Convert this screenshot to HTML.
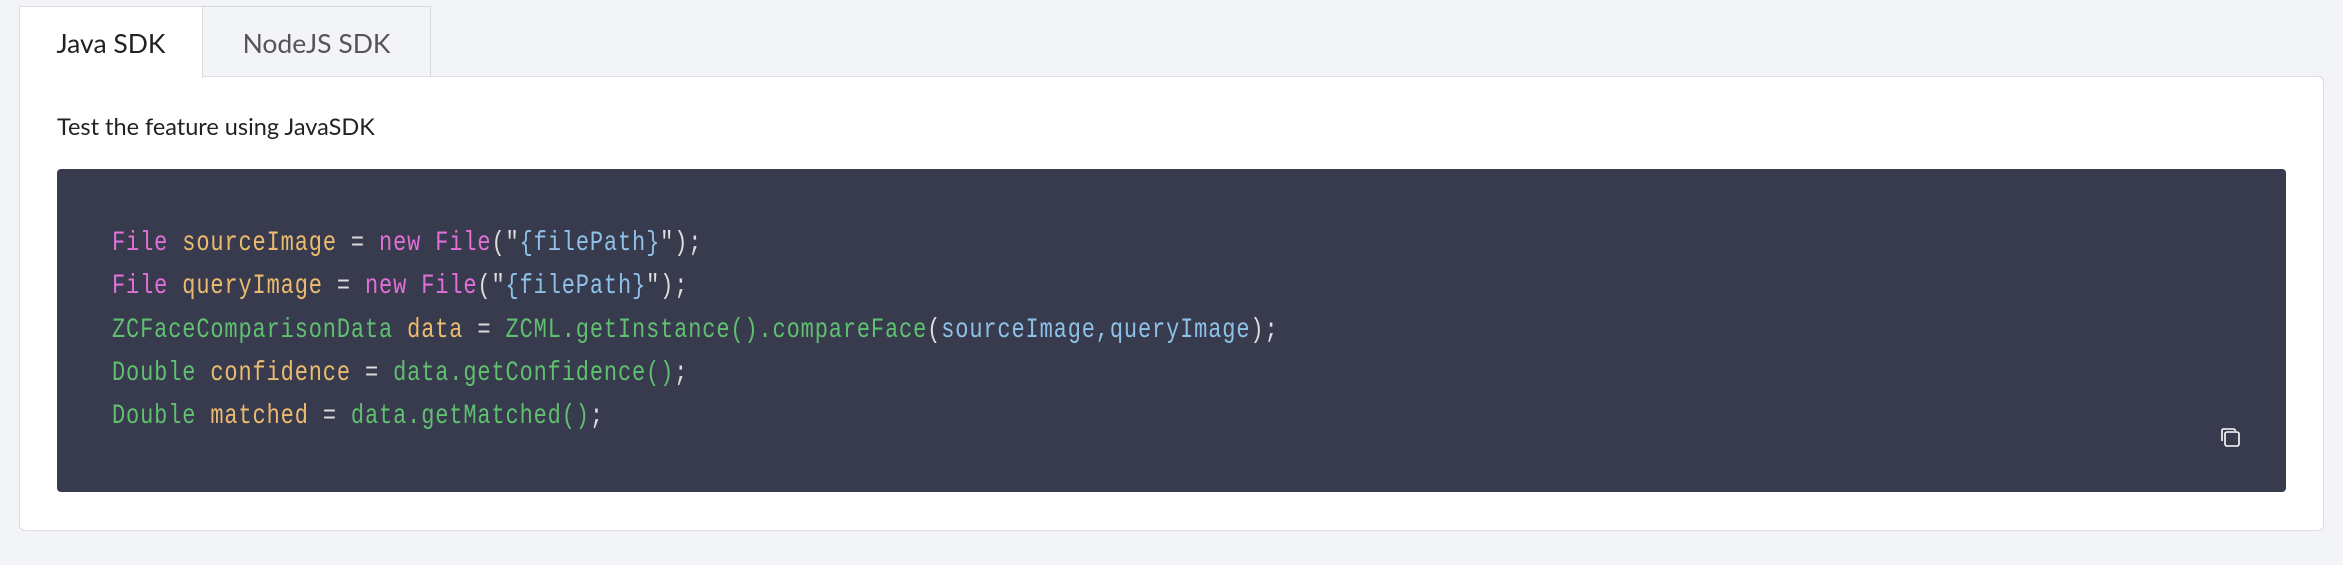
<!DOCTYPE html>
<html><head><style>
html,body{margin:0;padding:0;width:2343px;height:565px;background:#f3f4f8;overflow:hidden}
body{position:relative;font-family:"Lato","Liberation Sans",sans-serif}
.tab{position:absolute;top:6px;height:71px;box-sizing:border-box;font-size:26.5px;line-height:72px;text-align:center}
.t1{left:19px;width:184px;background:#fff;border:1px solid #dcdde3;border-bottom:none;color:#222;height:72px;z-index:2}
.t2{left:202px;width:229px;background:#f3f4f8;border:1px solid #d6d7de;color:#555}
.panel{position:absolute;left:19px;top:76px;width:2305px;height:455px;box-sizing:border-box;background:#fff;border:1px solid #dcdde3;border-radius:0 6px 6px 6px}
.desc{position:absolute;left:57px;top:113px;font-size:23.5px;color:#222}
.code{position:absolute;left:57px;top:169px;width:2229px;height:323px;background:#383a4d;border-radius:4px}
pre{margin:0;position:absolute;left:112px;top:222px;font-family:"Liberation Mono",monospace;font-size:28px;line-height:43.3px;letter-spacing:1.1px;color:#ddd;transform:scaleX(0.785);transform-origin:0 0}
.k{color:#e070d8}.v{color:#ebbb6f}.s{color:#8dc1e6}.g{color:#5fc06f}
</style></head><body>
<div class="tab t1">Java SDK</div>
<div class="tab t2">NodeJS SDK</div>
<div class="panel"></div>
<div class="desc">Test the feature using JavaSDK</div>
<div class="code"></div>
<pre><span class="k">File</span> <span class="v">sourceImage</span> = <span class="k">new File</span>("<span class="s">{filePath}</span>");
<span class="k">File</span> <span class="v">queryImage</span> = <span class="k">new File</span>("<span class="s">{filePath}</span>");
<span class="g">ZCFaceComparisonData</span> <span class="v">data</span> = <span class="g">ZCML.getInstance().compareFace</span>(<span class="s">sourceImage,queryImage</span>);
<span class="g">Double</span> <span class="v">confidence</span> = <span class="g">data.getConfidence()</span>;
<span class="g">Double</span> <span class="v">matched</span> = <span class="g">data.getMatched()</span>;</pre>
<svg style="position:absolute;left:2219px;top:426px" width="24" height="24" viewBox="0 0 24 24" fill="none" stroke="#fff" stroke-width="1.6">
<path d="M3 15V4.5Q3 3 4.5 3H14Q16 3 16.5 5"/><rect x="6" y="6" width="14" height="14" rx="2"/></svg>
</body></html>
